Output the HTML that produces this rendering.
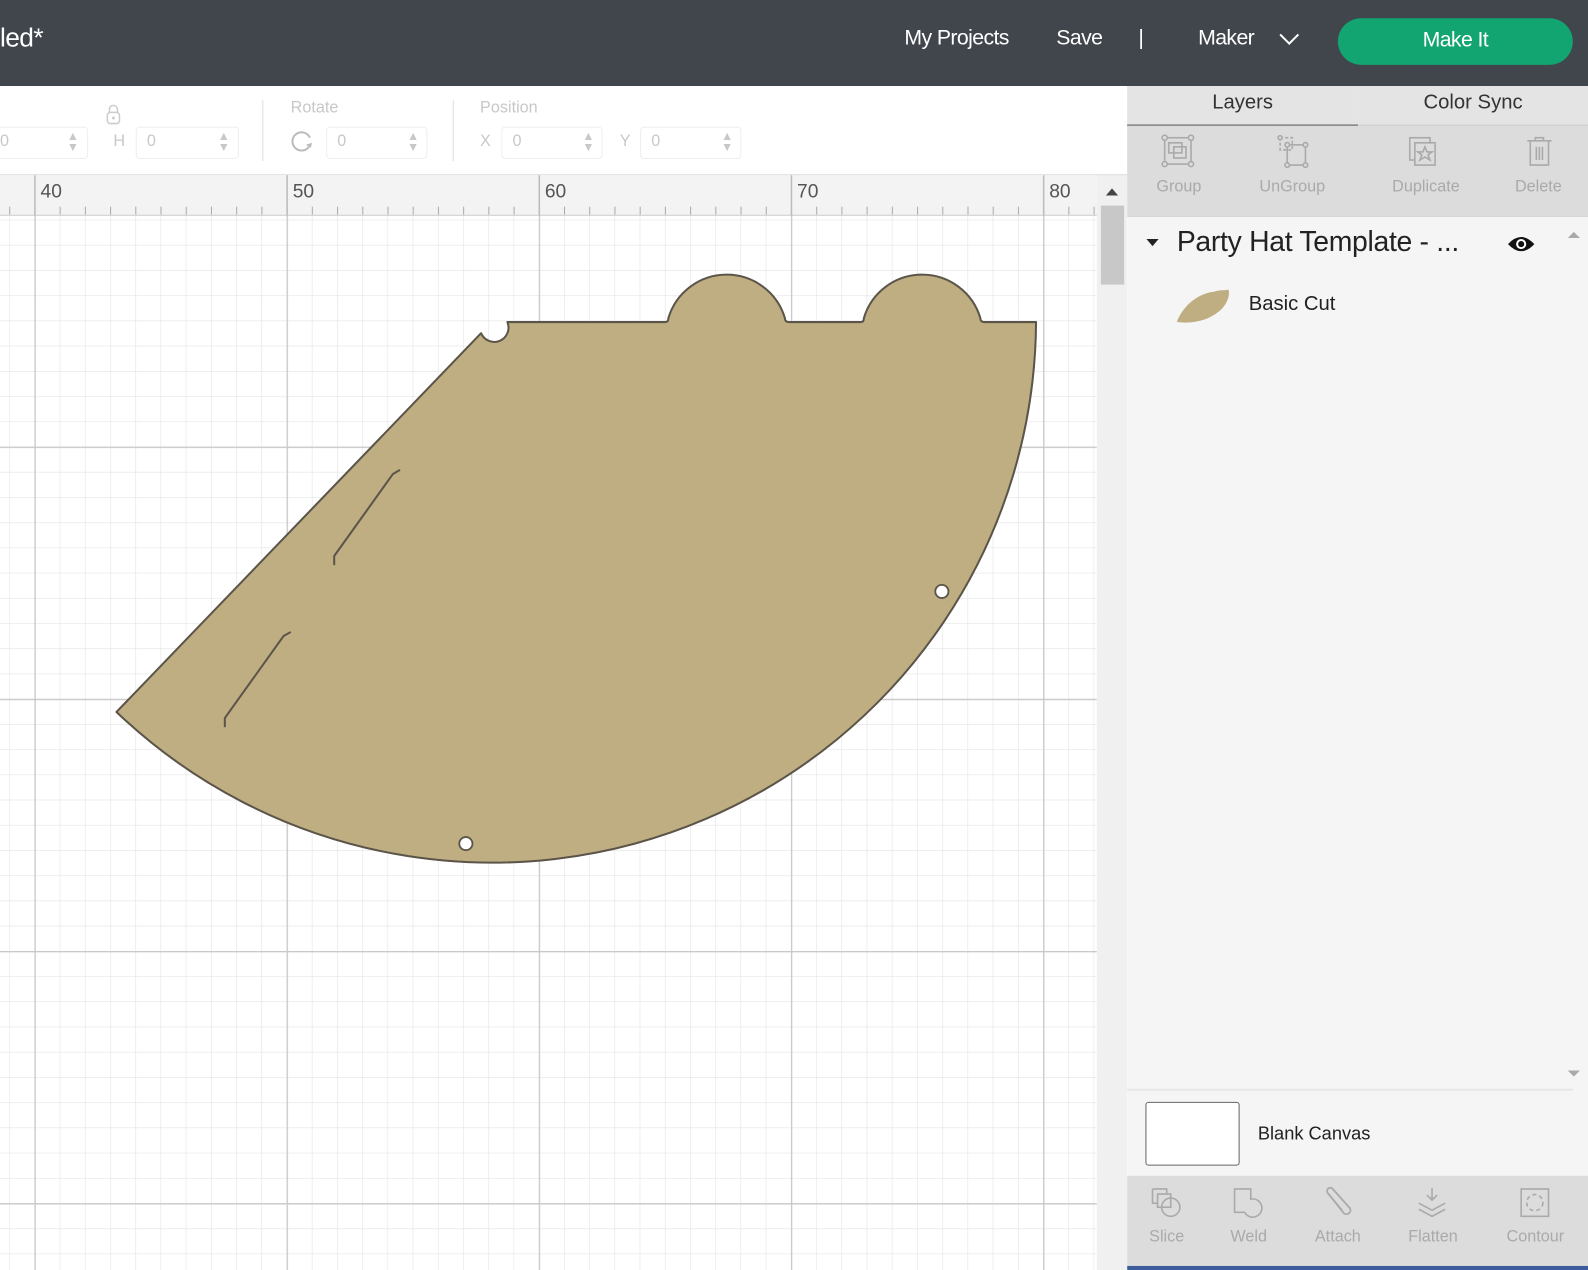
<!DOCTYPE html>
<html><head><meta charset="utf-8">
<style>
html,body{margin:0;padding:0;width:1588px;height:1270px;overflow:hidden;background:#fff;font-family:"Liberation Sans",sans-serif;}
#w{position:absolute;left:0;top:0;width:1568px;height:1254px;transform:scale(1.01276,1.01276);transform-origin:0 0;}
.a{position:absolute;}
.hd{left:0;top:0;width:1568px;height:85px;background:#41464d;color:#fff;}
.hd span{position:absolute;font-size:21px;top:26px;letter-spacing:-0.6px;}
.btn{left:1321px;top:18px;width:232px;height:46px;border-radius:23px;background:#12a571;color:#fff;font-size:21px;text-align:center;line-height:44px;letter-spacing:-0.6px;}
.tb{left:0;top:85px;width:1113px;height:87px;background:#fff;border-bottom:2px solid #ddd;}
.g{color:#c8c8c8;font-size:16px;position:absolute;}
.inp{position:absolute;height:30px;border:1px solid #eee;border-radius:4px;}
.rp{left:1113px;top:85px;width:455px;height:1169px;background:#f5f5f5;}
.tab{position:absolute;top:0;height:38px;line-height:32px;font-size:20px;color:#333;text-align:center;background:#e4e4e4;}
.tools{position:absolute;left:0;top:39px;width:455px;height:89px;background:#dcdcdc;}
.tl{position:absolute;top:52px;font-size:16px;color:#aaa;text-align:center;}
</style></head><body><div id="w">

<div class="a hd">
<span style="left:0;top:22px;font-size:26px">led*</span>
<span style="left:893px">My Projects</span>
<span style="left:1043px">Save</span>
<span style="left:1124px">|</span>
<span style="left:1183px">Maker</span>
<svg class="a" style="left:1262px;top:32px" width="22" height="14"><path d="M2 2 L11 11 L20 2" stroke="#fff" stroke-width="2" fill="none"/></svg>
</div>
<div class="a btn">Make It</div>

<div class="a tb">
<svg class="a" style="left:100px;top:16px" width="26" height="26"><rect x="6" y="10" width="12" height="11" rx="3" fill="none" stroke="#ccc" stroke-width="1.5"/><path d="M8 10 V7 a4 4 0 0 1 8 0 V10" fill="none" stroke="#ccc" stroke-width="1.5"/><circle cx="12" cy="15.5" r="1.5" fill="#ccc"/></svg>
<div class="inp" style="left:-10px;top:40px;width:95px"></div><span class="g" style="left:0;top:46px">0</span>
<span class="g" style="left:66px;top:42px;font-size:12px">▲<br></span><span class="g" style="left:66px;top:53px;font-size:12px">▼</span>
<span class="g" style="left:112px;top:46px">H</span>
<div class="inp" style="left:134px;top:40px;width:100px"></div><span class="g" style="left:145px;top:46px">0</span>
<span class="g" style="left:215px;top:42px;font-size:12px">▲</span><span class="g" style="left:215px;top:53px;font-size:12px">▼</span>
<div class="a" style="left:259px;top:14px;width:1px;height:60px;background:#ddd"></div>
<span class="g" style="left:287px;top:13px">Rotate</span>
<svg class="a" style="left:285px;top:40px" width="28" height="28"><path d="M20 20 A9 9 0 1 1 21 11" fill="none" stroke="#bbb" stroke-width="2"/><path d="M17 18 l5 3 l1 -5z" fill="#bbb"/></svg>
<div class="inp" style="left:322px;top:40px;width:98px"></div><span class="g" style="left:333px;top:46px">0</span>
<span class="g" style="left:402px;top:42px;font-size:12px">▲</span><span class="g" style="left:402px;top:53px;font-size:12px">▼</span>
<div class="a" style="left:447px;top:14px;width:1px;height:60px;background:#ddd"></div>
<span class="g" style="left:474px;top:13px">Position</span>
<span class="g" style="left:474px;top:46px">X</span>
<div class="inp" style="left:495px;top:40px;width:98px"></div><span class="g" style="left:506px;top:46px">0</span>
<span class="g" style="left:575px;top:42px;font-size:12px">▲</span><span class="g" style="left:575px;top:53px;font-size:12px">▼</span>
<span class="g" style="left:612px;top:46px">Y</span>
<div class="inp" style="left:632px;top:40px;width:98px"></div><span class="g" style="left:643px;top:46px">0</span>
<span class="g" style="left:712px;top:42px;font-size:12px">▲</span><span class="g" style="left:712px;top:53px;font-size:12px">▼</span>
</div>

<svg class="a" style="left:0;top:0" width="1113" height="1254">
<defs>
<pattern id="mn" patternUnits="userSpaceOnUse" x="34" y="192" width="24.9" height="24.9"><path d="M0 0 V24.9 M0 0 H24.9" stroke="#e4e4e4" stroke-width="1.2" fill="none"/></pattern>
<pattern id="mj" patternUnits="userSpaceOnUse" x="34" y="192" width="249" height="249"><path d="M0.5 0 V249 M0 0.5 H249" stroke="#c9c9c9" stroke-width="1.6" fill="none"/></pattern>
<pattern id="tk" patternUnits="userSpaceOnUse" x="34" y="0" width="24.9" height="300"><path d="M0.5 204 V212" stroke="#aaa" stroke-width="1"/></pattern>
</defs>
<rect x="0" y="173" width="1083" height="1081" fill="#fff"/>
<rect x="0" y="173" width="1083" height="1081" fill="url(#mn)"/>
<rect x="0" y="173" width="1083" height="1081" fill="url(#mj)"/>
<rect x="0" y="173" width="1083" height="40" fill="#f3f3f3"/>
<rect x="0" y="173" width="1083" height="40" fill="url(#tk)"/>
<line x1="0" y1="212.5" x2="1083" y2="212.5" stroke="#ccc"/>
<g stroke="#bbb" stroke-width="1.5"><line x1="34.5" y1="173" x2="34.5" y2="213"/><line x1="283.5" y1="173" x2="283.5" y2="213"/><line x1="532.5" y1="173" x2="532.5" y2="213"/><line x1="781.5" y1="173" x2="781.5" y2="213"/><line x1="1030.5" y1="173" x2="1030.5" y2="213"/></g>
<g font-family="Liberation Sans" font-size="19" fill="#555"><text x="40" y="195">40</text><text x="289" y="195">50</text><text x="538" y="195">60</text><text x="787" y="195">70</text><text x="1036" y="195">80</text></g>
<rect x="1083" y="173" width="30" height="1081" fill="#f0f0f0"/>
<rect x="1087" y="203" width="23" height="78" fill="#c8c8c8"/>
<path d="M1092 193 l6 -7 l6 7z" fill="#444"/>

<path d="M115 703 L475 329 A13 13 0 0 0 501 318 L657 318 q3 0 3 -4 A60 60 0 0 1 775 314 q0 4 4 4 L850 318 q3 0 3 -4 A60 60 0 0 1 968 314 q0 4 4 4 L1023 318 A537 537 0 0 1 115 703 Z" fill="#bfae82" stroke="#5b5449" stroke-width="2" stroke-linejoin="round"/>
<path d="M330 558 V549 L388 468 L395 464 M222 718 V709 L280 628 L287 624" fill="none" stroke="#5b5449" stroke-width="2"/>
<circle cx="930" cy="584" r="6.5" fill="#fff" stroke="#5b5449" stroke-width="1.8"/>
<circle cx="460" cy="833" r="6.5" fill="#fff" stroke="#5b5449" stroke-width="1.8"/>
</svg>

<div class="a rp">
<div class="tab" style="left:0;width:228px;border-bottom:2px solid #555">Layers</div>
<div class="tab" style="left:228px;width:227px;border-bottom:2px solid #ccc">Color Sync</div>
<div class="tools">
<svg class="a" style="left:33px;top:8px" width="36" height="36" fill="none" stroke="#aaa" stroke-width="1.6"><rect x="4" y="4" width="26" height="26"/><rect x="8" y="9" width="13" height="10"/><rect x="13" y="13" width="12" height="11"/><g fill="#dcdcdc"><circle cx="4" cy="4" r="2.5"/><circle cx="30" cy="4" r="2.5"/><circle cx="4" cy="30" r="2.5"/><circle cx="30" cy="30" r="2.5"/></g></svg>
<svg class="a" style="left:147px;top:8px" width="36" height="36" fill="none" stroke="#aaa" stroke-width="1.6"><path d="M4 4 H16 V16 H4Z" stroke-dasharray="3 2"/><rect x="11" y="11" width="18" height="20"/><g fill="#dcdcdc"><circle cx="11" cy="11" r="2.2"/><circle cx="29" cy="11" r="2.2"/><circle cx="11" cy="31" r="2.2"/><circle cx="29" cy="31" r="2.2"/><circle cx="4" cy="4" r="2"/></g></svg>
<svg class="a" style="left:275px;top:8px" width="36" height="36" fill="none" stroke="#aaa" stroke-width="1.6"><rect x="4" y="4" width="20" height="22"/><rect x="9" y="9" width="20" height="22" fill="#dcdcdc"/><path d="M19 13 l2 5 h5 l-4 3 l2 5 l-5 -3 l-5 3 l2 -5 l-4 -3 h5z"/></svg>
<svg class="a" style="left:390px;top:8px" width="36" height="36" fill="none" stroke="#aaa" stroke-width="1.6"><path d="M5 7 H29 M13 7 V4 H21 V7 M8 7 V31 H26 V7 M14 13 V26 M17 13 V26 M20 13 V26"/></svg>
<div class="tl" style="left:10px;width:82px">Group</div>
<div class="tl" style="left:118px;width:90px">UnGroup</div>
<div class="tl" style="left:245px;width:100px">Duplicate</div>
<div class="tl" style="left:370px;width:72px">Delete</div>
</div>
<div class="a" style="left:0;top:128px;width:455px;height:1px;background:#ccc"></div>
<svg class="a" style="left:18px;top:150px" width="14" height="10"><path d="M1 1 H13 L7 8Z" fill="#222"/></svg>
<div class="a" style="left:49px;top:138px;font-size:28px;color:#222;letter-spacing:-0.3px">Party Hat Template - ...</div>
<svg class="a" style="left:374px;top:146px" width="30" height="20"><path d="M2 10 Q15 -4 28 10 Q15 24 2 10Z" fill="#111"/><circle cx="15" cy="10" r="5" fill="#fff"/><circle cx="15" cy="10" r="3" fill="#111"/></svg>
<svg class="a" style="left:434px;top:142px" width="14" height="10"><path d="M1 8 L7 2 L13 8Z" fill="#aaa"/></svg>
<svg class="a" style="left:46px;top:199px" width="60" height="38"><path d="M3 34 C8 20 22 6 40 4 C46 2 50 3 54 2 C56 8 52 18 44 24 C34 32 20 36 3 34Z" fill="#bfae82"/></svg>
<div class="a" style="left:120px;top:204px;font-size:20px;color:#222">Basic Cut</div>
<svg class="a" style="left:434px;top:970px" width="14" height="10"><path d="M1 2 H13 L7 8Z" fill="#aaa"/></svg>
<div class="a" style="left:0;top:990px;width:440px;height:2px;background:#e6e6e6"></div>
<div class="a" style="left:18px;top:1003px;width:91px;height:61px;background:#fff;border:1.5px solid #666;border-radius:3px"></div>
<div class="a" style="left:129px;top:1024px;font-size:18px;color:#222">Blank Canvas</div>
<div class="a" style="left:0;top:1076px;width:455px;height:89px;background:#dcdcdc">
<svg class="a" style="left:22px;top:10px" width="34" height="34" fill="none" stroke="#aaa" stroke-width="1.6"><path d="M3 3 H17 V8 M3 3 V17 H8"/><rect x="8" y="8" width="13" height="13"/><circle cx="21" cy="21" r="9"/></svg>
<svg class="a" style="left:103px;top:10px" width="34" height="34" fill="none" stroke="#aaa" stroke-width="1.6"><path d="M3 3 H19 V13 A9 9 0 1 1 13 26 H3Z"/></svg>
<svg class="a" style="left:190px;top:10px" width="34" height="34" fill="none" stroke="#aaa" stroke-width="1.8"><path d="M9 8 L24 27 A4 4 0 0 0 30 22 L13 3 A3 3 0 0 0 8 7 L22 24"/></svg>
<svg class="a" style="left:284px;top:10px" width="34" height="34" fill="none" stroke="#aaa" stroke-width="1.6"><path d="M17 2 V14 M12 9 L17 14 L22 9 M4 17 L17 24 L30 17 M4 23 L17 30 L30 23"/></svg>
<svg class="a" style="left:386px;top:10px" width="34" height="34" fill="none" stroke="#aaa" stroke-width="1.6"><rect x="3" y="3" width="27" height="27"/><circle cx="16.5" cy="16.5" r="8" stroke-dasharray="4 3"/></svg>
<div class="tl" style="left:10px;width:58px">Slice</div>
<div class="tl" style="left:92px;width:56px">Weld</div>
<div class="tl" style="left:175px;width:66px">Attach</div>
<div class="tl" style="left:268px;width:68px">Flatten</div>
<div class="tl" style="left:366px;width:74px">Contour</div>
</div>
<div class="a" style="left:0;top:1165px;width:455px;height:4px;background:#3d5c9c"></div>
</div>

</div></body></html>
